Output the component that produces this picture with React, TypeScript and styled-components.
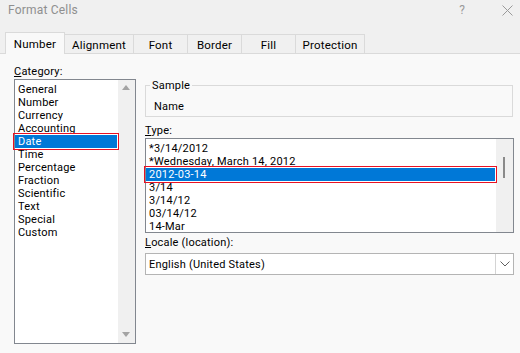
import React from 'react';
import styled, { createGlobalStyle } from 'styled-components';

const GlobalStyle = createGlobalStyle`
  html, body {
    margin: 0;
    padding: 0;
    background: #f9f9f9;
  }
  body {
    font-family: Roboto, 'Liberation Sans', sans-serif;
    font-size: 11px;
    letter-spacing: 0.2px;
    color: #000;
  }
`;

const Dialog = styled.div`
  width: 520px;
  height: 353px;
  background: #f9f9f9;
  display: flex;
  flex-direction: column;
  overflow: hidden;
`;

const TitleBar = styled.div`
  height: 25px;
  flex-shrink: 0;
  background: #f0f0f0;
  display: flex;
  align-items: center;
  padding: 0 7px 0 8px;
  color: #8f8f8f;
  font-size: 12px;
`;

const Title = styled.div`
  flex: 1;
  margin-top: -5px;
`;

const HelpButton = styled.span`
  margin-top: -5px;
  margin-right: 37px;
  color: #9a9a9a;
  font-size: 12px;
`;

const CloseButton = styled.span`
  margin-top: -5px;
  display: flex;
`;

const TabStrip = styled.div`
  height: 29px;
  flex-shrink: 0;
  background: #f0f0f0;
  display: flex;
  align-items: flex-end;
  padding-left: 5px;
  border-bottom: 1px solid #dadada;
  box-sizing: border-box;
`;

const Tab = styled.div<{ $active?: boolean; $w: number }>`
  width: ${p => p.$w}px;
  height: ${p => (p.$active ? 22 : 19)}px;
  box-sizing: border-box;
  display: flex;
  align-items: center;
  justify-content: center;
  border: 1px solid #dadada;
  border-left-width: ${p => (p.$active ? 1 : 0)}px;
  border-bottom: none;
  background: ${p => (p.$active ? '#f9f9f9' : '#f0f0f0')};
  margin-bottom: ${p => (p.$active ? -1 : 0)}px;
  padding-top: 1px;
  font-size: 11.5px;
`;

const Content = styled.div`
  flex: 1;
  display: flex;
  padding: 10px 6px 0 14px;
  gap: 9px;
`;

const LeftCol = styled.div`
  width: 122px;
  display: flex;
  flex-direction: column;
`;

const RightCol = styled.div`
  flex: 1;
  display: flex;
  flex-direction: column;
`;

const Label = styled.div<{ $mt?: number }>`
  height: 15px;
  line-height: 15px;
  margin-top: ${p => p.$mt ?? 0}px;
  u {
    text-decoration: underline;
  }
`;

const ListBox = styled.div<{ $h: number }>`
  height: ${p => p.$h}px;
  box-sizing: border-box;
  border: 1px solid #82878f;
  background: #fff;
  display: flex;
`;

const Items = styled.div<{ $pt: number }>`
  flex: 1;
  padding-top: ${p => p.$pt}px;
  padding-right: 1px;
  display: flex;
  flex-direction: column;
`;

const Item = styled.div<{ $selected?: boolean }>`
  height: 13px;
  line-height: 13px;
  padding-left: 3px;
  white-space: nowrap;
  position: relative;
  z-index: ${p => (p.$selected ? 1 : 0)};
  background: ${p => (p.$selected ? '#0078d7' : 'transparent')};
  color: ${p => (p.$selected ? '#fff' : '#000')};
  outline: ${p => (p.$selected ? '1px solid #e81123' : 'none')};
  outline-offset: 1px;
`;

const ScrollBar = styled.div`
  width: 17px;
  background: #f0f0f0;
  position: relative;
  flex-shrink: 0;
`;

const Arrow = styled.div<{ $down?: boolean }>`
  position: absolute;
  left: 4px;
  ${p => (p.$down ? 'bottom: 6px;' : 'top: 5px;')}
  width: 0;
  height: 0;
  border-left: 4.5px solid transparent;
  border-right: 4.5px solid transparent;
  ${p => (p.$down ? 'border-top: 5px solid #a3a3a3;' : 'border-bottom: 5px solid #a3a3a3;')}
`;

const Thumb = styled.div`
  position: absolute;
  left: 7px;
  top: 18px;
  width: 2px;
  height: 21px;
  background: #8a8a8a;
`;

const Group = styled.div`
  position: relative;
  margin-top: 21px;
  height: 32px;
  box-sizing: border-box;
  border: 1px solid #dadada;
  width: 368px;
  padding: 14px 0 0 8px;
`;

const Legend = styled.div`
  position: absolute;
  left: 4px;
  top: -8px;
  padding: 0 2px;
  line-height: 15px;
  background: #f9f9f9;
`;

const SampleText = styled.div`
  line-height: 13px;
`;

const Combo = styled.div`
  margin-top: 3px;
  height: 22px;
  box-sizing: border-box;
  border: 1px solid #b4b4b4;
  background: #fff;
  display: flex;
  align-items: center;
  padding-left: 3px;
`;

const ComboText = styled.div`
  flex: 1;
`;

const ComboButton = styled.div`
  width: 17px;
  height: 20px;
  border-left: 1px solid #d4d4d4;
  display: flex;
  align-items: center;
  justify-content: center;
`;

const categories = [
  'General', 'Number', 'Currency', 'Accounting', 'Date', 'Time', 'Percentage',
  'Fraction', 'Scientific', 'Text', 'Special', 'Custom',
];

const types = [
  '*3/14/2012', '*Wednesday, March 14, 2012', '2012-03-14', '3/14', '3/14/12', '03/14/12', '14-Mar',
];

const tabs: [string, number][] = [
  ['Number', 60], ['Alignment', 69], ['Font', 54], ['Border', 54], ['Fill', 54], ['Protection', 69],
];

export default function App() {
  return (
    <Dialog>
      <GlobalStyle />
      <TitleBar>
        <Title>Format Cells</Title>
        <HelpButton>?</HelpButton>
        <CloseButton>
          <svg width="11" height="11" viewBox="0 0 11 11">
            <path d="M0.5 0.5 L10.5 10.5 M10.5 0.5 L0.5 10.5" stroke="#9a9a9a" strokeWidth="1" />
          </svg>
        </CloseButton>
      </TitleBar>
      <TabStrip>
        {tabs.map(([t, w], i) => (
          <Tab key={t} $w={w} $active={i === 0}>{t}</Tab>
        ))}
      </TabStrip>
      <Content>
        <LeftCol>
          <Label><u>C</u>ategory:</Label>
          <ListBox $h={265}>
            <Items $pt={3}>
              {categories.map(c => (
                <Item key={c} $selected={c === 'Date'}>{c}</Item>
              ))}
            </Items>
            <ScrollBar>
              <Arrow />
              <Arrow $down />
            </ScrollBar>
          </ListBox>
        </LeftCol>
        <RightCol>
          <Group>
            <Legend>Sample</Legend>
            <SampleText>Name</SampleText>
          </Group>
          <Label $mt={6}><u>T</u>ype:</Label>
          <ListBox $h={95}>
            <Items $pt={3}>
              {types.map(t => (
                <Item key={t} $selected={t === '2012-03-14'}>{t}</Item>
              ))}
            </Items>
            <ScrollBar>
              <Thumb />
            </ScrollBar>
          </ListBox>
          <Label $mt={2}><u>L</u>ocale (location):</Label>
          <Combo>
            <ComboText>English (United States)</ComboText>
            <ComboButton>
              <svg width="10" height="6" viewBox="0 0 10 6">
                <path d="M0.5 0.5 L5 5 L9.5 0.5" stroke="#606060" strokeWidth="1" fill="none" />
              </svg>
            </ComboButton>
          </Combo>
        </RightCol>
      </Content>
    </Dialog>
  );
}
